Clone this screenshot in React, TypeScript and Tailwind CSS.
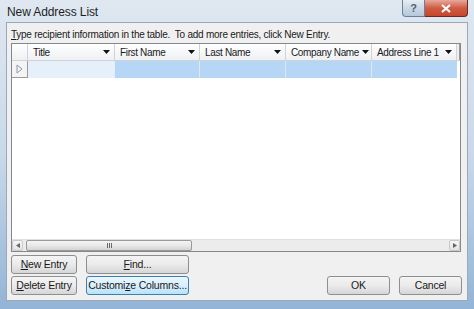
import React from "react";

const font = { fontFamily: '"Segoe UI", "Liberation Sans", Arial, sans-serif' };

function HeaderCell({ label, w }: { label: string; w: number }) {
  return (
    <div
      className="h-full flex items-center justify-between gap-[3px] pl-[5px] pr-[4px] border-r border-[#cfd3d8] bg-gradient-to-b from-[#ffffff] to-[#eef0f3] text-[10px] tracking-[-0.35px] text-[#1a1a1a] whitespace-nowrap"
      style={{ width: w }}
    >
      <span>{label}</span>
      <svg width="7" height="4" viewBox="0 0 7 4" className="shrink-0">
        <path d="M0 0 H7 L3.5 4 Z" fill="#111" />
      </svg>
    </div>
  );
}

function Btn({ children, w, focused }: { children: React.ReactNode; w: number; focused?: boolean }) {
  return (
    <div
      className={
        "h-[19px] rounded-[3px] border flex items-center justify-center text-[10.5px] tracking-[-0.2px] text-[#1a1a1a] whitespace-nowrap " +
        (focused
          ? "border-[#3c7fb1] bg-gradient-to-b from-[#eaf6fd] via-[#d9f0fc] to-[#b8e2fb]"
          : "border-[#8e8f8f] bg-gradient-to-b from-[#f4f4f4] via-[#ebebeb] to-[#d6d6d6]")
      }
      style={{ width: w }}
    >
      {children}
    </div>
  );
}

export default function App() {
  const cols = [
    { label: "Title", w: 87 },
    { label: "First Name", w: 85 },
    { label: "Last Name", w: 86 },
    { label: "Company Name", w: 86 },
    { label: "Address Line 1", w: 85 },
  ];
  return (
    <div
      className="w-[474px] h-[309px] overflow-hidden flex flex-col bg-gradient-to-b from-[#dfe8f1] via-[#c9d9e9] to-[#93b4d6]"
      style={font}
    >
      {/* title bar */}
      <div className="h-[22px] flex items-start justify-between pl-[7px] pr-[6px] shrink-0">
        <span className="mt-[3px] text-[12px] tracking-[-0.1px] text-[#1e1e1e]">New Address List</span>
        <div className="flex">
          <div className="w-[23px] h-[17px] border border-[#6d7f94] border-t-0 rounded-bl-[4px] bg-gradient-to-b from-[#e6edf4] via-[#cbd8e5] to-[#b5c8dc] flex items-center justify-center text-[11px] font-bold text-[#4d6279]">
            ?
          </div>
          <div className="w-[43px] h-[17px] border border-[#6b2a1d] border-t-0 border-l-0 rounded-br-[4px] bg-gradient-to-b from-[#e6a89b] via-[#cf5b43] to-[#c6452c] flex items-center justify-center">
            <svg width="10" height="9" viewBox="0 0 10 9">
              <path d="M1 1 L9 8 M9 1 L1 8" stroke="#fff" strokeWidth="2.2" />
            </svg>
          </div>
        </div>
      </div>
      {/* dialog body */}
      <div className="ml-[6px] mr-[6px] h-[279px] bg-[#f0f0f0] border border-[#9aa9ba] flex flex-col pl-[4px] pr-[5px]">
        <div className="h-[20px] pt-[5px] text-[10px] tracking-[-0.25px] leading-[13px] text-[#1a1a1a] whitespace-nowrap">
          <span className="underline">T</span>ype recipient information in the table.&nbsp; To add more entries, click New Entry.
        </div>
        {/* table */}
        <div className="w-[450px] h-[209px] border border-[#828790] bg-white flex flex-col">
          <div className="h-[17px] flex border-b border-[#cfd3d8] shrink-0">
            <div className="w-[16px] h-full border-r border-[#cfd3d8] bg-gradient-to-b from-[#ffffff] to-[#eef0f3]" />
            {cols.map((c) => (
              <HeaderCell key={c.label} label={c.label} w={c.w} />
            ))}
            <div className="w-[3px] h-full border-r border-[#9a9a9a] bg-[#f0f0f0]" />
          </div>
          <div className="h-[17px] flex shrink-0">
            <div className="w-[16px] h-full border-r border-b border-[#9a9a9a] bg-[#f4f4f4] flex items-center justify-center">
              <svg width="7" height="10" viewBox="0 0 7 10">
                <path d="M1 1 L6 5 L1 9 Z" fill="none" stroke="#8a9aaa" strokeWidth="1" />
              </svg>
            </div>
            <div className="h-full bg-[#e6f0fb] border-r border-[#e3eefa]" style={{ width: 87 }} />
            <div className="h-full bg-[#b6d6f6] border-r border-[#d9e9f9]" style={{ width: 85 }} />
            <div className="h-full bg-[#b6d6f6] border-r border-[#d9e9f9]" style={{ width: 86 }} />
            <div className="h-full bg-[#b6d6f6] border-r border-[#d9e9f9]" style={{ width: 86 }} />
            <div className="h-full bg-[#b6d6f6]" style={{ width: 85 }} />
          </div>
          <div className="flex-1" />
          {/* horizontal scrollbar */}
          <div className="h-[12px] flex items-stretch bg-[#ececec] border-t border-[#e0e0e0]">
            <div className="w-[11px] flex items-center justify-center border border-[#c9c9c9] bg-gradient-to-b from-[#f6f6f6] to-[#e2e2e2] rounded-[2px]">
              <svg width="4" height="5" viewBox="0 0 4 5">
                <path d="M4 0 L0 2.5 L4 5 Z" fill="#666" />
              </svg>
            </div>
            <div className="w-[3px]" />
            <div className="w-[166px] flex items-center justify-center border border-[#9a9a9a] rounded-[2px] bg-gradient-to-b from-[#f4f4f4] via-[#e8e8e8] to-[#d4d4d4]">
              <div className="flex gap-[1px]">
                <div className="w-[1px] h-[5px] bg-[#6a6a6a]" />
                <div className="w-[1px] h-[5px] bg-[#6a6a6a]" />
                <div className="w-[1px] h-[5px] bg-[#6a6a6a]" />
              </div>
            </div>
            <div className="flex-1" />
            <div className="w-[11px] flex items-center justify-center border border-[#c9c9c9] bg-gradient-to-b from-[#f6f6f6] to-[#e2e2e2] rounded-[2px]">
              <svg width="4" height="5" viewBox="0 0 4 5">
                <path d="M0 0 L4 2.5 L0 5 Z" fill="#666" />
              </svg>
            </div>
          </div>
        </div>
        {/* buttons */}
        <div className="mt-[3px] flex gap-[9px]">
          <Btn w={66}>
            <span>
              <span className="underline">N</span>ew Entry
            </span>
          </Btn>
          <Btn w={103}>
            <span>
              <span className="underline">F</span>ind...
            </span>
          </Btn>
        </div>
        <div className="mt-[2px] flex items-center">
          <div className="flex gap-[9px]">
            <Btn w={66}>
              <span>
                <span className="underline">D</span>elete Entry
              </span>
            </Btn>
            <Btn w={103} focused>
              <span>
                Customi<span className="underline">z</span>e Columns...
              </span>
            </Btn>
          </div>
          <div className="flex-1" />
          <div className="flex gap-[9px]">
            <Btn w={63}>OK</Btn>
            <Btn w={63}>Cancel</Btn>
          </div>
        </div>
      </div>
    </div>
  );
}
